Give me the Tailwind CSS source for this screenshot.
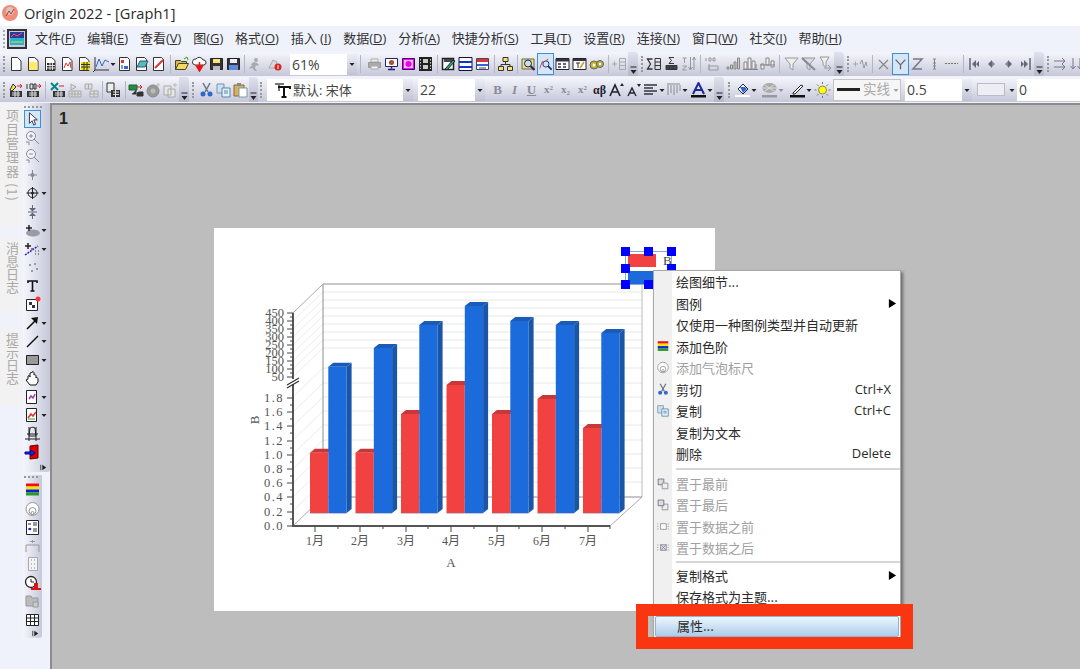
<!DOCTYPE html>
<html lang="zh-CN">
<head>
<meta charset="UTF-8">
<title>Origin 2022 - [Graph1]</title>
<script src="https://cdn.jsdelivr.net/npm/@tailwindcss/browser@4"></script>
</head>
<body class="w-[1080px] h-[669px] overflow-hidden bg-[#eff1fb] text-[#333] font-['Open_Sans','Noto_Sans_CJK_SC',sans-serif]">

<!-- icon sprites -->
<svg class="hidden">
  <symbol id="new" viewBox="0 0 17 16"><path d="M3.5 1.5h6l3.500 3.500v9.500h-9.500z" fill="#fff" stroke="#333"/></symbol>
  <symbol id="ydoc" viewBox="0 0 17 16"><path d="M3.500 1.500h6l3.500 3v10h-9.500z" fill="#fff" stroke="#333"/><path d="M4 6h8.500v8h-8.500z" fill="#ffe96e"/></symbol>
  <symbol id="ws" viewBox="0 0 17 16"><path d="M3.500 1.500h6l3.500 3v10h-9.500z" fill="#fff" stroke="#333"/><path d="M5 7h8v7h-8z" fill="#333"/><path d="M5 9.500h8M5 12h8M8 7v7M10.500 7v7" stroke="#ddd"/></symbol>
  <symbol id="grdoc" viewBox="0 0 17 16"><path d="M3.500 1.500h6l3.500 3v10h-9.500z" fill="#fff" stroke="#333"/><path d="M5 12l2-5 2 3 2-4 1 6" fill="none" stroke="#d33"/></symbol>
  <symbol id="yg" viewBox="0 0 17 16"><path d="M3.500 1.500h6l3.500 3v10h-9.500z" fill="#fff" stroke="#333"/><path d="M5 6h9v8h-9z" fill="#f2e100"/><path d="M5 8.500h9M5 11h9M8 6v8M11 6v8" stroke="#333"/></symbol>
  <symbol id="chart" viewBox="0 0 17 16"><path d="M2 1v13h14" fill="none" stroke="#333"/><path d="M3 11l3-8 3 7 3-6 4 2" fill="none" stroke="#36c"/><path d="M2 14l-2 2" stroke="#333"/></symbol>
  <symbol id="lay1" viewBox="0 0 17 16"><path d="M3.500 1.500h8l2 2v11h-10z" fill="#fff" stroke="#333"/><path d="M5 4h3v3h-3z" fill="#d33"/><path d="M8 10h4v3h-4z" fill="#36c"/><path d="M5 9h2v4h-2z" fill="#6ab"/></symbol>
  <symbol id="lay2" viewBox="0 0 17 16"><path d="M3.500 1.500h8l2 2v11h-10z" fill="#fff" stroke="#333"/><path d="M4 11l3-6h8l-3 6z" fill="#5bb" stroke="#357"/></symbol>
  <symbol id="lay3" viewBox="0 0 17 16"><path d="M3.500 1.500h8l2 2v11h-10z" fill="#fff" stroke="#333"/><path d="M5 12l8-8" stroke="#d33" stroke-width="2"/></symbol>
  <symbol id="open" viewBox="0 0 17 16"><path d="M1.500 13.500v-9h5l1 1h5v2" fill="#d8b94a" stroke="#443"/><path d="M1.500 13.500l3-6h10l-3 6z" fill="#f3d95e" stroke="#443"/><path d="M10 3l3-2 1 3" fill="none" stroke="#2a2"/></symbol>
  <symbol id="cloud" viewBox="0 0 17 16"><path d="M4 9a3 3 0 0 1 1-6 4 4 0 0 1 7 1 2.500 2.500 0 0 1 1 5z" fill="#fff" stroke="#333"/><path d="M8.500 6v6M5.500 10l3 5 3-5z" fill="#e11" stroke="#e11" stroke-width="1.500"/></symbol>
  <symbol id="save" viewBox="0 0 17 16"><path d="M2.500 2.500h12v11h-12z" fill="#333" stroke="#222"/><path d="M5 3h7v4h-7z" fill="#f7e67a"/><path d="M5 10h7v4h-7z" fill="#bbb"/></symbol>
  <symbol id="saveall" viewBox="0 0 17 16"><path d="M2.500 2.500h12v11h-12z" fill="#334" stroke="#222"/><path d="M5 3h7v4h-7z" fill="#eee"/><path d="M4 9h9v5h-9z" fill="#5a8ad8"/></symbol>
  <symbol id="run" viewBox="0 0 17 16"><path d="M10 2a2 2 0 1 1 0 4 2 2 0 0 1 0-4zM5 8l3-2 3 1 2 2-2 1-1-1-1 3 2 3h-2l-3-3-3 1 1-2 2-1z" fill="#a9a9b0"/></symbol>
  <symbol id="grayred" viewBox="0 0 17 16"><path d="M3 12l4-8 4 2-2 6z" fill="#d8d8dc" stroke="#aaa"/><circle cx="12" cy="11" r="3.500" fill="#d22"/><path d="M12 9v4" stroke="#fff"/></symbol>
  <symbol id="print" viewBox="0 0 17 16"><path d="M5 3h7v3h-7z" fill="#eee" stroke="#aaa"/><path d="M2.500 6.500h12v5h-12z" fill="#aaa" stroke="#999"/><path d="M5 10h7v3h-7z" fill="#f3f3f3" stroke="#aaa"/></symbol>
  <symbol id="screen" viewBox="0 0 17 16"><path d="M2.500 2.500h12v8h-12z" fill="#fff" stroke="#226"/><circle cx="8.500" cy="6.500" r="2.500" fill="#d33"/><path d="M6 8l5-3" stroke="#2a2"/><path d="M8.500 10.500v2M5 13.500h7" stroke="#226" stroke-width="1.500"/></symbol>
  <symbol id="pink" viewBox="0 0 17 16"><path d="M2.500 2.500h12v11h-12z" fill="#f0f" stroke="#306"/><path d="M4 4h9v8h-9z" fill="#fbd"/><circle cx="8.500" cy="8" r="3" fill="#e0e"/></symbol>
  <symbol id="film" viewBox="0 0 17 16"><path d="M2 1h13v14h-13z" fill="#222"/><path d="M6 3h5v4h-5zM6 9h5v4h-5z" fill="#ccc"/><path d="M3.500 3v10M13.500 3v10" stroke="#ccc" stroke-dasharray="1.500 1.500"/></symbol>
  <symbol id="note" viewBox="0 0 17 16"><path d="M2.500 2.500h11v11h-11z" fill="#fff" stroke="#222" stroke-width="1.500"/><path d="M4 3h9v3h-9z" fill="#445"/><path d="M5 13l8-9 2 1-8 9z" fill="#2a8" stroke="#222"/></symbol>
  <symbol id="lines" viewBox="0 0 17 16"><path d="M2 1.500h13v13h-13z" fill="#fff" stroke="#113"/><path d="M2 5h13v2h-13zM2 10h13v2h-13z" fill="#1133cc"/></symbol>
  <symbol id="lines2" viewBox="0 0 17 16"><path d="M2.500 2.500h12v11h-12z" fill="#fff" stroke="#446"/><path d="M3 3h11v3h-11z" fill="#d33"/><path d="M3 8h11v2h-11z" fill="#36c"/><path d="M5 12h7" stroke="#446"/></symbol>
  <symbol id="tree" viewBox="0 0 17 16"><path d="M6 1.500h5v4h-5zM1.500 10.500h5v4h-5zM10.500 10.500h5v4h-5z" fill="#fbe36a" stroke="#333"/><path d="M8.500 5.500v3M4 10.500v-2h9v2" fill="none" stroke="#333"/></symbol>
  <symbol id="find" viewBox="0 0 17 16"><path d="M2 3h12v10h-12z" fill="#f0e070" stroke="#665"/><circle cx="8" cy="7.500" r="3.500" fill="#bfe0f5" stroke="#226"/><path d="M10.500 10l4 4" stroke="#226" stroke-width="2"/></symbol>
  <symbol id="findg" viewBox="0 0 17 16"><path d="M2 13l3-8 3 4 3-7" fill="none" stroke="#d33"/><circle cx="9" cy="8" r="3.500" fill="#cfe8f8" stroke="#226"/><path d="M11.500 10.500l4 4" stroke="#226" stroke-width="2"/></symbol>
  <symbol id="table" viewBox="0 0 17 16"><path d="M2 2.500h13v11h-13z" fill="#fff" stroke="#223"/><path d="M2 3h13v2.500h-13z" fill="#334"/><path d="M4 8h3M9 8h3M4 11h3M9 11h3" stroke="#334" stroke-width="1.500"/></symbol>
  <symbol id="tedit" viewBox="0 0 17 16"><path d="M2 2.500h13v11h-13z" fill="#fff" stroke="#223"/><path d="M2 3h13v2h-13z" fill="#334"/><path d="M5 7h4M7 7v5" stroke="#333"/><path d="M9 12l4-6" stroke="#c93" stroke-width="1.500"/></symbol>
  <symbol id="gear" viewBox="0 0 17 16"><circle cx="6" cy="9" r="4" fill="#c9b021" stroke="#665"/><circle cx="12" cy="8" r="3.500" fill="#a9b04a" stroke="#665"/><circle cx="6" cy="9" r="1.500" fill="#fff"/><circle cx="12" cy="8" r="1.200" fill="#fff"/></symbol>
  <symbol id="plusrow" viewBox="0 0 17 16"><path d="M1 8h5M3.500 5.500v5" stroke="#aaa"/><path d="M8.500 2.500h6v11h-6zM8.500 6h6M8.500 9.500h6" fill="none" stroke="#aaa"/></symbol>
  <symbol id="sumrow" viewBox="0 0 17 16"><path d="M6.500 3h-5l3 5-3 5h5" fill="none" stroke="#333" stroke-width="1.300"/><path d="M9 2.500h5.500v11h-5.500zM9 6h5.500M9 9.500h5.500" fill="none" stroke="#333"/></symbol>
  <symbol id="sumcol" viewBox="0 0 17 16"><path d="M11 1.500h-5l2.500 3-2.500 3h5" fill="none" stroke="#333"/><path d="M3 9.500h11v4h-11zM6.500 9.500v4M10 9.500v4" fill="#444" stroke="#333"/></symbol>
  <symbol id="sort" viewBox="0 0 17 16"><path d="M10.500 1v13M8.500 11l2 3 2-3M14 14v-13M12.500 4l1.500-3 1.500 3" fill="none" stroke="#999"/><path d="M2.500 2h4M4.500 2v5M2.500 10h4l-4 4h4" fill="none" stroke="#999"/></symbol>
  <symbol id="pct" viewBox="0 0 17 16"><path d="M3 5v-3M6 2h2v3h-2zM10 2h2v3h-2zM6 10h9v4h-9zM6 8v6" fill="none" stroke="#999"/></symbol>
  <symbol id="bar1" viewBox="0 0 17 16"><path d="M2 13h2v-2h-2zM5.500 13h2v-4h-2zM9 13h2v-7h-2zM12.500 13h2v-11h-2z" fill="#ccc" stroke="#888"/></symbol>
  <symbol id="bar2" viewBox="0 0 17 16"><path d="M2 13v-7h3v7zM6 13v-11h3v11zM10 13v-8h3v8zM14 13v-5" fill="#eee" stroke="#888"/><path d="M1 13.500h15" stroke="#888"/></symbol>
  <symbol id="bar3" viewBox="0 0 17 16"><path d="M2 8h3v5h-3zM7 2h3v7h-3zM12 5h3v6h-3zM1 9h15" fill="#eee" stroke="#888"/></symbol>
  <symbol id="filter" viewBox="0 0 17 16"><path d="M2 2h13l-5 6v6l-3-2v-4z" fill="#eee" stroke="#999"/></symbol>
  <symbol id="filterx" viewBox="0 0 17 16"><path d="M2 2h13l-5 6v6l-3-2v-4z" fill="#ddd" stroke="#999"/><path d="M2 2l13 12" stroke="#889" stroke-width="2"/></symbol>
  <symbol id="filtera" viewBox="0 0 17 16"><path d="M3 1h9l-3 5v5l-3-2v-3z" fill="#eee" stroke="#999"/><path d="M7 12h7M11 9l3 3-3 3" fill="none" stroke="#999"/></symbol>
  <symbol id="plus-s" viewBox="0 0 17 16"><path d="M1 8h5M3.500 5.500v5" stroke="#aaa"/><path d="M8 8l2-4 2 8 2-6 1 4" fill="none" stroke="#999"/></symbol>
  <symbol id="xx" viewBox="0 0 17 16"><path d="M4 4l9 9M13 4l-9 9" stroke="#888" stroke-width="1.200"/></symbol>
  <symbol id="yy" viewBox="0 0 17 16"><path d="M3 3l5.500 6 5.500-6M8.500 9v5" fill="none" stroke="#667" stroke-width="1.500"/></symbol>
  <symbol id="zz" viewBox="0 0 17 16"><path d="M4 3h9l-9 10h9" fill="none" stroke="#778" stroke-width="1.500"/></symbol>
  <symbol id="ival" viewBox="0 0 17 16"><path d="M7 3h3M8.500 3v10M7 13h3" stroke="#888"/><path d="M7 7h3M7 10h3" stroke="#888"/></symbol>
  <symbol id="none" viewBox="0 0 17 16"><path d="M1 6h15v3h-15z" fill="#ddd"/><path d="M2 7.500h13" stroke="#777" stroke-dasharray="2 1"/></symbol>
  <symbol id="first" viewBox="0 0 17 16"><path d="M4 2v12" stroke="#667" stroke-width="1.500"/><path d="M6 8l4-4v8zM10 8l3-3v6z" fill="#667"/></symbol>
  <symbol id="prev" viewBox="0 0 17 16"><path d="M5 8l4-4v8z" fill="#667"/><path d="M9 5l3 3-3 3z" fill="#889"/></symbol>
  <symbol id="next" viewBox="0 0 17 16"><path d="M12 8l-4-4v8z" fill="#667"/><path d="M8 5l-3 3 3 3z" fill="#889"/></symbol>
  <symbol id="last" viewBox="0 0 17 16"><path d="M13 2v12" stroke="#667" stroke-width="1.500"/><path d="M11 8l-4-4v8zM7 8l-3-3v6z" fill="#667"/></symbol>
  <symbol id="swap" viewBox="0 0 17 16"><path d="M2 5h11M10 2l3 3-3 3M2 11h11M10 8l3 3-3 3" fill="none" stroke="#778"/></symbol>
  <symbol id="down2" viewBox="0 0 17 16"><path d="M4 2v11M1.500 10l2.500 3 2.500-3M11 2v11M8.500 10l2.500 3 2.500-3" fill="none" stroke="#778"/></symbol>
  <!-- second row -->
  <symbol id="imp1" viewBox="0 0 17 16"><path d="M2 9h12v6h-12z" fill="#333"/><path d="M4 11h8M4 13h8M7 9v6M10 9v6" stroke="#ddd"/><path d="M2 8l3-6 3 3-4 4z" fill="#f3e34a" stroke="#333"/><path d="M9 4h5M12 2l2 2-2 2" fill="none" stroke="#d22"/></symbol>
  <symbol id="imp2" viewBox="0 0 17 16"><path d="M2 9h12v6h-12z" fill="#333"/><path d="M4 11h8M4 13h8M7 9v6M10 9v6" stroke="#ddd"/><path d="M2 2v5M5 2h3v5h-3zM9 2h2v5h-2z" fill="none" stroke="#333"/><path d="M12 4h3M14 2l2 2-2 2" fill="none" stroke="#d22"/></symbol>
  <symbol id="xcol" viewBox="0 0 17 16"><path d="M2 1l7 7M9 1l-7 7" stroke="#088" stroke-width="2"/><path d="M4 9h12v6h-12z" fill="#333"/><path d="M6 11h8M6 13h8M9 9v6M12 9v6" stroke="#ddd"/><path d="M10 4h5" stroke="#d22"/></symbol>
  <symbol id="gcol1" viewBox="0 0 17 16"><path d="M3 9h12v6h-12zM6 9v6M9 9v6M12 9v6M3 12h12M5 2l5 3-5 3z" fill="#ddd" stroke="#aaa"/></symbol>
  <symbol id="gcol2" viewBox="0 0 17 16"><path d="M2 2h7v5h-7zM5.500 2v5M7 9h8v6h-8zM11 9v6M7 12h8" fill="#ddd" stroke="#aaa"/></symbol>
  <symbol id="mcopy" viewBox="0 0 17 16"><path d="M2 1h7v9h-7z" fill="#eee" stroke="#333"/><path d="M6 8h9v7h-9z" fill="#333"/><path d="M8 10h6M8 12.500h6M10.500 8v7" stroke="#ddd"/></symbol>
  <symbol id="grtool" viewBox="0 0 17 16"><path d="M1 3h8v5h-8z" fill="#2a8a3a" stroke="#164"/><path d="M9 5h5M12 3l2 2-2 2" fill="none" stroke="#d22"/><path d="M8 8v4h-4M11 10h4v4h-6v-3z" fill="#333" stroke="#333"/></symbol>
  <symbol id="grball" viewBox="0 0 17 16"><circle cx="8" cy="9" r="6" fill="#999" stroke="#888"/><circle cx="8" cy="9" r="2.500" fill="#bbb"/><path d="M11 3h4M13 1v4" stroke="#bbb"/></symbol>
  <symbol id="grcopy" viewBox="0 0 17 16"><path d="M2 4h7v9h-7zM6 7h7v8h-7z" fill="#e6e6e6" stroke="#aaa"/><path d="M11 3h4M13 1v4" stroke="#bbb"/></symbol>
  <symbol id="cut" viewBox="0 0 17 16"><path d="M5 1l5 9M12 1l-5 9" stroke="#678" stroke-width="1.500"/><circle cx="5" cy="12" r="2.500" fill="#36c"/><circle cx="12" cy="12" r="2.500" fill="#36c"/></symbol>
  <symbol id="copy" viewBox="0 0 17 16"><path d="M2 2h7v9h-7z" fill="#cfe0f4" stroke="#79a"/><path d="M7 6h8v9h-8z" fill="#e6f0fb" stroke="#58a"/><path d="M9 9h4M9 11h4" stroke="#58a"/></symbol>
  <symbol id="paste" viewBox="0 0 17 16"><path d="M2 3h10v11h-10z" fill="#d8b25a" stroke="#864"/><path d="M5 1h4v3h-4z" fill="#888"/><path d="M7 6h8v9h-8z" fill="#fff" stroke="#79a"/></symbol>
  <symbol id="fT" viewBox="0 0 17 16"><path d="M1 2h9M5 2v7" stroke="#777" stroke-width="2"/><path d="M4 5h12v2M10 5v10M7.500 15h5" fill="none" stroke="#111" stroke-width="2"/></symbol>
  <symbol id="aup" viewBox="0 0 17 16"><path d="M2 14l5-11 5 11M4 10h6" fill="none" stroke="#223" stroke-width="1.600"/><path d="M12 4l2-3 2 3z" fill="#223"/></symbol>
  <symbol id="adn" viewBox="0 0 17 16"><path d="M3 14l4-8 4 8M5 11h4" fill="none" stroke="#223" stroke-width="1.400"/><path d="M12 2l2 3 2-3z" fill="#223"/></symbol>
  <symbol id="align" viewBox="0 0 17 16"><path d="M2 3h13M2 6h9M2 9h13M2 12h9" stroke="#334" stroke-width="1.300"/></symbol>
  <symbol id="tab" viewBox="0 0 17 16"><path d="M2 2h13M3 3v10M6 3v8M9 3v10M12 3v8M15 3v6" stroke="#889"/></symbol>
  <symbol id="acol" viewBox="0 0 17 16"><path d="M3 12l5.500-11 5.500 11M5.500 8h6" fill="none" stroke="#1c2a9c" stroke-width="2"/><path d="M1 13h15v2.500h-15z" fill="#111"/></symbol>
  <symbol id="fill" viewBox="0 0 17 16"><path d="M4 7l5-5 5 5-5 5z" fill="#fff" stroke="#224"/><path d="M6 5h5l2 2-4 4z" fill="#36c"/><path d="M1 14h15" stroke="#fff" stroke-width="2"/></symbol>
  <symbol id="pat" viewBox="0 0 17 16"><ellipse cx="8.500" cy="6" rx="7" ry="5" fill="#aaa"/><path d="M2 6h13M4 3l9 6M13 3l-9 6" stroke="#ddd"/><path d="M1 13h15v2.500h-15z" fill="#999"/></symbol>
  <symbol id="pen" viewBox="0 0 17 16"><path d="M4 11l8-8 2 1-8 8h-2z" fill="#fff" stroke="#222"/><path d="M1 13h15v2.500h-15z" fill="#111"/></symbol>
  <symbol id="sun" viewBox="0 0 17 16"><circle cx="8.500" cy="8" r="4" fill="#ff0" stroke="#886"/><path d="M8.500 0v2M8.500 14v2M0.500 8h2M14.500 8h2M3 2.500l1.500 1.500M14 2.500l-1.500 1.500M3 13.500l1.500-1.500M14 13.500l-1.500-1.500" stroke="#776"/></symbol>
  <!-- left bar -->
  <symbol id="ptr" viewBox="0 0 17 16"><path d="M5 1v12l3-3 2 5 2-1-2-5h4z" fill="#fff" stroke="#223"/></symbol>
  <symbol id="zin" viewBox="0 0 17 16"><circle cx="7" cy="6" r="4.500" fill="#f4f4f8" stroke="#889"/><path d="M5 6h4M7 4v4M10 9l5 5" stroke="#889"/><path d="M2 12h3v3" fill="none" stroke="#889"/></symbol>
  <symbol id="zout" viewBox="0 0 17 16"><circle cx="7" cy="6" r="4.500" fill="#f4f4f8" stroke="#889"/><path d="M5 6h4M10 9l5 5" stroke="#889"/><path d="M2 12h3v3" fill="none" stroke="#889"/></symbol>
  <symbol id="cross" viewBox="0 0 17 16"><path d="M8.500 3v10M4 8h9" stroke="#889"/><circle cx="8.500" cy="8" r="2" fill="#889"/></symbol>
  <symbol id="target" viewBox="0 0 17 16"><circle cx="8.500" cy="8" r="4.500" fill="none" stroke="#222"/><path d="M8.500 2v12M2.500 8h12" stroke="#222"/><circle cx="8.500" cy="8" r="1.500" fill="#222"/></symbol>
  <symbol id="vsel" viewBox="0 0 17 16"><path d="M5 4l3.500 3.500 3.500-3.500zM5 12l3.500-3.500 3.500 3.500z" fill="#667"/><path d="M4 8h9M8.500 1v3M8.500 12v3" stroke="#667"/></symbol>
  <symbol id="ell" viewBox="0 0 17 16"><ellipse cx="9" cy="11" rx="7" ry="3.500" fill="#9a9aa8"/><path d="M5 3v6M2 6h6" stroke="#222" stroke-width="1.500"/></symbol>
  <symbol id="draw" viewBox="0 0 17 16"><path d="M1 14l13-9" stroke="#22c" stroke-dasharray="2 1" stroke-width="1.500"/><path d="M4 2v6M1 5h6" stroke="#222" stroke-width="1.500"/><path d="M11 10h1M14 10h1M11 13h1M14 13h1" stroke="#333"/><circle cx="8" cy="8" r="1" fill="#c33"/></symbol>
  <symbol id="dots" viewBox="0 0 17 16"><path d="M5 5h2v2h-2zM10 4h2v2h-2zM12 9h2v2h-2zM7 11h2v2h-2z" fill="#99a"/></symbol>
  <symbol id="bigT" viewBox="0 0 17 16"><path d="M4 5v-2h9v2M8.500 3v10M6.500 13h4" fill="none" stroke="#111" stroke-width="1.600"/></symbol>
  <symbol id="plot" viewBox="0 0 17 16"><path d="M2.500 3.500h11v11h-11z" fill="#fff" stroke="#223"/><path d="M5 6h3v3h-3zM8 9h3v3h-3z" fill="#333"/><circle cx="14" cy="3" r="2.500" fill="#f33"/></symbol>
  <symbol id="arr" viewBox="0 0 17 16"><path d="M3 14l9-9" stroke="#111" stroke-width="1.600"/><path d="M14 2l-1 7-6-6z" fill="#111"/></symbol>
  <symbol id="ln" viewBox="0 0 17 16"><path d="M3 14l11-11" stroke="#111" stroke-width="1.500"/></symbol>
  <symbol id="rectt" viewBox="0 0 17 16"><path d="M2.500 3.500h12v9h-12z" fill="#999" stroke="#222"/></symbol>
  <symbol id="hand" viewBox="0 0 17 16"><path d="M4 9v-3c1-1 2 0 2 1v-4c1-1 2 0 2 0v-1c1-1 2 0 2 1v2c1-1 2 0 2 1v2c1-1 2 0 2 1v3l-2 3h-6l-4-5z" fill="#fff" stroke="#111"/></symbol>
  <symbol id="magic" viewBox="0 0 17 16"><path d="M2.500 1.500h10v13h-10z" fill="#fff" stroke="#222"/><path d="M5 10l2-3 2 2 2-4" fill="none" stroke="#a3a" stroke-width="1.500"/></symbol>
  <symbol id="redg" viewBox="0 0 17 16"><path d="M2.500 1.500h10v13h-10z" fill="#fff" stroke="#222"/><path d="M4 11l3-4 2 2 3-4" fill="none" stroke="#d33" stroke-width="1.500"/><path d="M4 12h7" stroke="#2a2"/></symbol>
  <symbol id="spider" viewBox="0 0 17 16"><path d="M1 13h15M3 8h11M6 2c2-1 4-1 5 0l1 8h-7zM5 1v14M12 1v14" fill="none" stroke="#222"/></symbol>
  <symbol id="exit" viewBox="0 0 17 16"><path d="M6 2l8-1v13l-8 1z" fill="#d00" stroke="#600"/><path d="M1 8h6v-2l4 3-4 3v-2h-6z" fill="#13c" stroke="#00a"/></symbol>
  <symbol id="stripes" viewBox="0 0 17 16"><path d="M2 1.500h13v3h-13z" fill="#e11"/><path d="M2 4.500h13v3h-13z" fill="#f7e400"/><path d="M2 7.500h13v3h-13z" fill="#1122cc"/><path d="M2 10.500h13v3h-13z" fill="#2a9a2a"/></symbol>
  <symbol id="bubble" viewBox="0 0 17 16"><circle cx="8.500" cy="8" r="6.500" fill="#fff" stroke="#999"/><circle cx="8.500" cy="10" r="3.500" fill="none" stroke="#999"/><circle cx="8.500" cy="12" r="1.500" fill="none" stroke="#999"/></symbol>
  <symbol id="lg" viewBox="0 0 17 16"><path d="M2.500 1.500h12v14h-12z" fill="#fff" stroke="#223"/><path d="M4 5h3M4 10h3" stroke="#222"/><circle cx="6" cy="10" r="1.300" fill="#22c"/><path d="M9 3h4v4h-4zM9 9h4v4h-4z" fill="#999"/></symbol>
  <symbol id="bridge" viewBox="0 0 17 16"><path d="M2 14v-7h13v7" fill="none" stroke="#999"/><path d="M8.500 2v3M6 3.500h5" stroke="#999"/></symbol>
  <symbol id="ladder" viewBox="0 0 17 16"><path d="M4.500 1.500h9v13h-9z" fill="#f4f4f4" stroke="#aaa"/><path d="M7 4h1M10 4h1M7 8h1M10 8h1M7 12h1M10 12h1" stroke="#888"/></symbol>
  <symbol id="clock" viewBox="0 0 17 16"><circle cx="7" cy="7" r="5.500" fill="#fff" stroke="#222" stroke-width="1.300"/><path d="M7 4v3h3" fill="none" stroke="#222"/><path d="M10 8h4v5h3v2h-10v-2h3z" fill="#d11"/></symbol>
  <symbol id="folder" viewBox="0 0 17 16"><path d="M2 3h5l1 2h6v8h-12z" fill="#bbb" stroke="#999"/><path d="M9 9h5v5h-5z" fill="#ccc" stroke="#999"/></symbol>
  <symbol id="grid" viewBox="0 0 17 16"><path d="M2.500 2.500h12v11h-12zM2.500 6h12M2.500 9.500h12M6.500 2.500v11M10.500 2.500v11" fill="#fff" stroke="#222"/></symbol>
  <!-- menu -->
  <symbol id="front" viewBox="0 0 17 16"><path d="M2.500 2.500h7v7h-7z" fill="#ddd" stroke="#667"/><path d="M7.500 7.500h7v7h-7z" fill="#eee" stroke="#889"/></symbol>
  <symbol id="back" viewBox="0 0 17 16"><path d="M7.500 7.500h7v7h-7z" fill="#eee" stroke="#889"/><path d="M2.500 2.500h7v7h-7z" fill="#ddd" stroke="#667"/></symbol>
  <symbol id="dfront" viewBox="0 0 17 16"><path d="M5.500 4.500h7v7h-7z" fill="#fff" stroke="#889"/><path d="M1 5h2M1 8h2M1 11h2M14 5h2M14 8h2M14 11h2" stroke="#aaa"/></symbol>
  <symbol id="dback" viewBox="0 0 17 16"><path d="M5.500 4.500h7v7h-7z" fill="#ddd" stroke="#889"/><path d="M5.500 4.500l7 7M12.500 4.500l-7 7" stroke="#889"/><path d="M1 5h2M1 8h2M1 11h2M14 5h2M14 8h2M14 11h2" stroke="#aaa"/></symbol>
  <!-- chevron and small drop arrow -->
  <symbol id="chev" viewBox="0 0 9 9"><path d="M1.500 1h6" stroke="#222"/><path d="M1.500 4h6l-3 4z" fill="#222"/></symbol>
  <symbol id="dd" viewBox="0 0 6 16"><path d="M0.500 7h5l-2.500 3z" fill="#222"/></symbol>
  <symbol id="tri" viewBox="0 0 10 12"><path d="M1 1l8 5-8 5z" fill="#000"/></symbol>
</svg>

<!-- title bar -->
<header class="h-[26px] bg-white flex items-center pl-[1px]">
  <svg class="w-[18px] h-[18px] shrink-0" viewBox="0 0 18 18"><circle cx="9" cy="9" r="8" fill="#ef8d78"/><circle cx="9" cy="7" r="4" fill="#d9c5c0"/><path d="M5 12l3-5 2 3 3-5" fill="none" stroke="#b04040"/></svg>
  <span class="ml-[5px] text-[14.600px] leading-none text-[#2b2b2b]">Origin 2022 - [Graph1]</span>
</header>

<!-- menu bar -->
<nav class="h-[26px] flex items-center text-[13px] text-[#333] pl-[3px]">
  <span class="w-[2px] h-[18px] border-l-2 border-dotted border-[#aaa] mr-[2px]"></span>
  <svg class="w-[20px] h-[20px] shrink-0 mr-[8px]" viewBox="0 0 20 20"><path d="M1 1h18v18h-18z" fill="#c9cbd6" stroke="#333" stroke-width="2"/><path d="M3 3h14v6h-14z" fill="#2a3aa0"/><path d="M3 9h14v7h-14z" fill="#27b3c9"/><path d="M4 8l3-3 3 2 5-3" fill="none" stroke="#f55"/><path d="M4 13h12" stroke="#f0d040"/></svg>
  <div class="flex gap-x-[11.800px] whitespace-nowrap">
    <span>文件(<u>F</u>)</span><span>编辑(<u>E</u>)</span><span>查看(<u>V</u>)</span><span>图(<u>G</u>)</span><span>格式(<u>O</u>)</span><span>插入 (<u>I</u>)</span><span>数据(<u>D</u>)</span><span>分析(<u>A</u>)</span><span>快捷分析(<u>S</u>)</span><span>工具(<u>T</u>)</span><span>设置(<u>R</u>)</span><span>连接(<u>N</u>)</span><span>窗口(<u>W</u>)</span><span>社交(<u>I</u>)</span><span>帮助(<u>H</u>)</span>
  </div>
</nav>

<!-- toolbar row 1 -->
<div class="h-[24px] flex overflow-hidden">
  <div class="w-[638px] shrink-0 flex items-center pl-[3px] bg-linear-to-b from-[#f5f6fc] to-[#c6c8d9] rounded-tr-[3px]">
    <span class="w-[2px] h-[16px] border-l-2 border-dotted border-[#999] mr-[3px]"></span>
    <svg class="w-[17px] h-4 shrink-0"><use href="#new"/></svg>
    <svg class="w-[17px] h-4 shrink-0"><use href="#ydoc"/></svg>
    <svg class="w-[17px] h-4 shrink-0"><use href="#ws"/></svg>
    <svg class="w-[17px] h-4 shrink-0"><use href="#grdoc"/></svg>
    <svg class="w-[17px] h-4 shrink-0"><use href="#yg"/></svg>
    <svg class="w-[17px] h-4 shrink-0"><use href="#chart"/></svg>
    <svg class="w-[6px] h-4 shrink-0"><use href="#dd"/></svg>
    <svg class="w-[17px] h-4 shrink-0"><use href="#lay1"/></svg>
    <svg class="w-[17px] h-4 shrink-0"><use href="#lay2"/></svg>
    <svg class="w-[17px] h-4 shrink-0"><use href="#lay3"/></svg>
    <span class="w-px h-[18px] bg-[#b4b6c8] mx-[3px]"></span>
    <svg class="w-[17px] h-4 shrink-0"><use href="#open"/></svg>
    <svg class="w-[17px] h-4 shrink-0"><use href="#cloud"/></svg>
    <svg class="w-[17px] h-4 shrink-0"><use href="#save"/></svg>
    <svg class="w-[17px] h-4 shrink-0"><use href="#saveall"/></svg>
    <span class="w-px h-[18px] bg-[#b4b6c8] mx-[2px]"></span>
    <svg class="w-[17px] h-4 shrink-0 -ml-px"><use href="#run"/></svg>
    <svg class="w-[17px] h-4 shrink-0 ml-[3px]"><use href="#grayred"/></svg>
    <div class="ml-[7px] w-[67px] h-[21px] shrink-0 flex bg-white">
      <span class="flex-1 pl-[2px] text-[14px] leading-[21px] text-[#444]">61%</span>
      <span class="w-[10px] flex items-center bg-linear-to-b from-[#eceef6] to-[#c0c2d2]"><svg class="w-[6px] h-4 ml-[2px]"><use href="#dd"/></svg></span>
    </div>
    <span class="w-px h-[18px] bg-[#b4b6c8] ml-[3px] mr-[5px]"></span>
    <svg class="w-[17px] h-4 shrink-0"><use href="#print"/></svg>
    <svg class="w-[17px] h-4 shrink-0"><use href="#screen"/></svg>
    <svg class="w-[17px] h-4 shrink-0"><use href="#pink"/></svg>
    <svg class="w-[17px] h-4 shrink-0"><use href="#film"/></svg>
    <span class="w-px h-[18px] bg-[#b4b6c8] mx-[2.500px]"></span>
    <svg class="w-[17px] h-4 shrink-0"><use href="#note"/></svg>
    <svg class="w-[17px] h-4 shrink-0"><use href="#lines"/></svg>
    <svg class="w-[17px] h-4 shrink-0"><use href="#lines2"/></svg>
    <span class="w-px h-[18px] bg-[#b4b6c8] mx-[2.500px]"></span>
    <svg class="w-[17px] h-4 shrink-0"><use href="#tree"/></svg>
    <span class="w-px h-[18px] bg-[#b4b6c8] mx-[2.500px]"></span>
    <svg class="w-[17px] h-4 shrink-0"><use href="#find"/></svg>
    <span class="w-[17px] h-[22px] shrink-0 flex items-center bg-[#d5e7f7] border border-[#3d8fd6]"><svg class="w-[15px] h-4"><use href="#findg"/></svg></span>
    <svg class="w-[17px] h-4 shrink-0"><use href="#table"/></svg>
    <svg class="w-[17px] h-4 shrink-0"><use href="#tedit"/></svg>
    <svg class="w-[17px] h-4 shrink-0"><use href="#gear"/></svg>
    <span class="w-px h-[18px] bg-[#b4b6c8] mx-[2.500px]"></span>
    <svg class="w-[17px] h-4 shrink-0"><use href="#plusrow"/></svg>
    <span class="ml-auto w-[10px] self-stretch flex items-end justify-center pb-[1px] bg-linear-to-b from-[#e0e2ee] to-[#b5b7ca] rounded-tr-[3px]"><svg class="w-[9px] h-[9px]"><use href="#chev"/></svg></span>
  </div>
  <div class="w-[206px] shrink-0 flex items-center pl-[3px] bg-linear-to-b from-[#f5f6fc] to-[#c6c8d9]">
    <span class="w-[2px] h-[16px] border-l-2 border-dotted border-[#999] mr-[3px]"></span>
    <svg class="w-[17px] h-4 shrink-0"><use href="#sumrow"/></svg>
    <svg class="w-[17px] h-4 shrink-0"><use href="#sumcol"/></svg>
    <svg class="w-[17px] h-4 shrink-0"><use href="#sort"/></svg>
    <span class="w-px h-[18px] bg-[#b4b6c8] mx-[2.500px]"></span>
    <svg class="w-[17px] h-4 shrink-0 mr-[5px]"><use href="#pct"/></svg>
    <svg class="w-[17px] h-4 shrink-0"><use href="#bar1"/></svg>
    <svg class="w-[17px] h-4 shrink-0"><use href="#bar2"/></svg>
    <svg class="w-[17px] h-4 shrink-0"><use href="#bar3"/></svg>
    <span class="w-px h-[18px] bg-[#b4b6c8] mx-[3px]"></span>
    <svg class="w-[17px] h-4 shrink-0"><use href="#filter"/></svg>
    <svg class="w-[17px] h-4 shrink-0"><use href="#filterx"/></svg>
    <svg class="w-[17px] h-4 shrink-0"><use href="#filtera"/></svg>
    <span class="ml-auto w-[10px] self-stretch flex items-end justify-center pb-[1px] bg-linear-to-b from-[#e0e2ee] to-[#b5b7ca] rounded-tr-[3px]"><svg class="w-[9px] h-[9px]"><use href="#chev"/></svg></span>
  </div>
  <div class="w-[200px] shrink-0 flex items-center pl-[3px] bg-linear-to-b from-[#f5f6fc] to-[#c6c8d9]">
    <span class="w-[2px] h-[16px] border-l-2 border-dotted border-[#999] mr-[3px]"></span>
    <svg class="w-[17px] h-4 shrink-0"><use href="#plus-s"/></svg>
    <span class="w-px h-[18px] bg-[#b4b6c8] mx-[2.500px]"></span>
    <svg class="w-[17px] h-4 shrink-0"><use href="#xx"/></svg>
    <span class="w-[17px] h-[22px] shrink-0 flex items-center bg-[#d5e7f7] border border-[#3d8fd6]"><svg class="w-[15px] h-4"><use href="#yy"/></svg></span>
    <svg class="w-[17px] h-4 shrink-0"><use href="#zz"/></svg>
    <svg class="w-[17px] h-4 shrink-0"><use href="#ival"/></svg>
    <svg class="w-[17px] h-4 shrink-0"><use href="#none"/></svg>
    <span class="w-px h-[18px] bg-[#b4b6c8] mx-[2.500px]"></span>
    <svg class="w-[17px] h-4 shrink-0"><use href="#first"/></svg>
    <svg class="w-[17px] h-4 shrink-0"><use href="#prev"/></svg>
    <svg class="w-[17px] h-4 shrink-0"><use href="#next"/></svg>
    <svg class="w-[17px] h-4 shrink-0"><use href="#last"/></svg>
    <span class="ml-auto w-[10px] self-stretch flex items-end justify-center pb-[1px] bg-linear-to-b from-[#e0e2ee] to-[#b5b7ca] rounded-tr-[3px]"><svg class="w-[9px] h-[9px]"><use href="#chev"/></svg></span>
  </div>
  <div class="flex-1 flex items-center pl-[3px] bg-linear-to-b from-[#f5f6fc] to-[#c6c8d9]">
    <span class="w-[2px] h-[16px] border-l-2 border-dotted border-[#999] mr-[3px]"></span>
    <svg class="w-[17px] h-4 shrink-0"><use href="#swap"/></svg>
    <svg class="w-[17px] h-4 shrink-0"><use href="#down2"/></svg>
  </div>
</div>

<!-- toolbar row 2 -->
<div class="h-[25px] mt-px flex overflow-hidden">
  <div class="w-[189px] shrink-0 flex items-center pl-[3px] bg-linear-to-b from-[#f5f6fc] to-[#c6c8d9] rounded-tr-[3px]">
    <span class="w-[2px] h-[16px] border-l-2 border-dotted border-[#999] mr-[3px]"></span>
    <svg class="w-[17px] h-4 shrink-0"><use href="#imp1"/></svg>
    <svg class="w-[17px] h-4 shrink-0"><use href="#imp2"/></svg>
    <span class="w-px h-[18px] bg-[#b4b6c8] mx-[3px]"></span>
    <svg class="w-[17px] h-4 shrink-0"><use href="#xcol"/></svg>
    <svg class="w-[17px] h-4 shrink-0"><use href="#gcol1"/></svg>
    <svg class="w-[17px] h-4 shrink-0"><use href="#gcol2"/></svg>
    <span class="w-px h-[18px] bg-[#b4b6c8] mx-[2px]"></span>
    <svg class="w-[17px] h-4 shrink-0"><use href="#mcopy"/></svg>
    <span class="w-px h-[18px] bg-[#b4b6c8] mx-[2.500px]"></span>
    <svg class="w-[17px] h-4 shrink-0"><use href="#grtool"/></svg>
    <svg class="w-[17px] h-4 shrink-0"><use href="#grball"/></svg>
    <svg class="w-[17px] h-4 shrink-0"><use href="#grcopy"/></svg>
    <span class="ml-auto w-[10px] self-stretch flex items-end justify-center pb-[1px] bg-linear-to-b from-[#e0e2ee] to-[#b5b7ca] rounded-tr-[3px]"><svg class="w-[9px] h-[9px]"><use href="#chev"/></svg></span>
  </div>
  <div class="w-[69px] shrink-0 flex items-center pl-[3px] bg-linear-to-b from-[#f5f6fc] to-[#c6c8d9] rounded-tr-[3px]">
    <span class="w-[2px] h-[16px] border-l-2 border-dotted border-[#999] mr-[4px]"></span>
    <svg class="w-[17px] h-4 shrink-0"><use href="#cut"/></svg>
    <svg class="w-[17px] h-4 shrink-0"><use href="#copy"/></svg>
    <svg class="w-[17px] h-4 shrink-0"><use href="#paste"/></svg>
    <span class="ml-auto w-[10px] self-stretch flex items-end justify-center pb-[1px] bg-linear-to-b from-[#e0e2ee] to-[#b5b7ca] rounded-tr-[3px]"><svg class="w-[9px] h-[9px]"><use href="#chev"/></svg></span>
  </div>
  <div class="w-[466px] shrink-0 flex items-center pl-[2px] bg-linear-to-b from-[#f5f6fc] to-[#c6c8d9]">
    <span class="w-[2px] h-[16px] border-l-2 border-dotted border-[#999] mr-[5px]"></span>
    <div class="w-[146px] h-[22px] shrink-0 flex items-center bg-white">
      <svg class="w-[17px] h-4 ml-[7px] shrink-0"><use href="#fT"/></svg>
      <span class="flex-1 pl-[2px] text-[13px] leading-[22px] text-[#444] whitespace-nowrap">默认: 宋体</span>
      <span class="w-[10px] h-full flex items-center bg-linear-to-b from-[#eceef6] to-[#c0c2d2]"><svg class="w-[6px] h-4 ml-[2px]"><use href="#dd"/></svg></span>
    </div>
    <div class="ml-[5px] w-[67px] h-[22px] shrink-0 flex bg-white">
      <span class="flex-1 pl-[2px] text-[14px] leading-[22px] text-[#444]">22</span>
      <span class="w-[10px] flex items-center bg-linear-to-b from-[#eceef6] to-[#c0c2d2]"><svg class="w-[6px] h-4 ml-[2px]"><use href="#dd"/></svg></span>
    </div>
    <div class="ml-[4px] flex items-center font-['Liberation_Serif','Noto_Sans_CJK_SC',serif] text-[#8a8c9c]">
      <span class="w-[17px] text-center text-[13px] font-bold">B</span>
      <span class="w-[17px] text-center text-[13px] font-bold italic">I</span>
      <span class="w-[17px] text-center text-[13px] font-bold underline">U</span>
      <span class="w-[17px] text-center text-[11px] font-bold">x<sup class="text-[7px]">2</sup></span>
      <span class="w-[17px] text-center text-[11px] font-bold">x<sub class="text-[7px]">2</sub></span>
      <span class="w-[17px] text-center text-[11px] font-bold">x<sup class="text-[7px]">2</sup></span>
      <span class="w-[17px] text-center text-[12px] font-bold text-[#223]">αβ</span>
    </div>
    <svg class="w-[17px] h-4 shrink-0"><use href="#aup"/></svg>
    <svg class="w-[17px] h-4 shrink-0"><use href="#adn"/></svg>
    <svg class="w-[17px] h-4 shrink-0"><use href="#align"/></svg>
    <svg class="w-[6px] h-4 shrink-0"><use href="#dd"/></svg>
    <svg class="w-[17px] h-4 shrink-0"><use href="#tab"/></svg>
    <svg class="w-[6px] h-4 shrink-0"><use href="#dd"/></svg>
    <svg class="w-[17px] h-4 shrink-0 ml-[2px]"><use href="#acol"/></svg>
    <svg class="w-[6px] h-4 shrink-0"><use href="#dd"/></svg>
    <span class="ml-auto w-[10px] self-stretch flex items-end justify-center pb-[1px] bg-linear-to-b from-[#e0e2ee] to-[#b5b7ca] rounded-tr-[3px]"><svg class="w-[9px] h-[9px]"><use href="#chev"/></svg></span>
  </div>
  <div class="flex-1 flex items-center pl-[4px] bg-linear-to-b from-[#f5f6fc] to-[#c6c8d9]">
    <span class="w-[2px] h-[16px] border-l-2 border-dotted border-[#999] mr-[4px]"></span>
    <svg class="w-[17px] h-4 shrink-0"><use href="#fill"/></svg>
    <svg class="w-[6px] h-4 shrink-0"><use href="#dd"/></svg>
    <svg class="w-[17px] h-4 shrink-0 ml-[4px]"><use href="#pat"/></svg>
    <svg class="w-[6px] h-4 shrink-0 opacity-40"><use href="#dd"/></svg>
    <svg class="w-[17px] h-4 shrink-0 ml-[5px]"><use href="#pen"/></svg>
    <svg class="w-[6px] h-4 shrink-0"><use href="#dd"/></svg>
    <svg class="w-[17px] h-4 shrink-0 ml-[2px]"><use href="#sun"/></svg>
    <div class="ml-[2px] w-[68px] h-[22px] shrink-0 flex items-center bg-[#f6f6f6] border border-[#c4c4c4]">
      <span class="w-[23px] h-[2.500px] ml-[3px] bg-[#222]"></span>
      <span class="ml-[3px] text-[13.500px] leading-none text-[#aaa] whitespace-nowrap">实线</span>
      <svg class="w-[6px] h-4 ml-[3px] opacity-40"><use href="#dd"/></svg>
    </div>
    <div class="ml-[4px] w-[67px] h-[22px] shrink-0 flex bg-white">
      <span class="flex-1 pl-[2px] text-[14px] leading-[22px] text-[#444]">0.5</span>
      <span class="w-[10px] flex items-center bg-linear-to-b from-[#eceef6] to-[#c0c2d2]"><svg class="w-[6px] h-4 ml-[2px]"><use href="#dd"/></svg></span>
    </div>
    <span class="ml-[5px] w-[28px] h-[13px] shrink-0 bg-[#eceef4] border border-[#b9bbc8]"></span>
    <svg class="w-[6px] h-4 shrink-0 ml-[4px]"><use href="#dd"/></svg>
    <div class="ml-[2px] flex-1 h-[22px] flex bg-white">
      <span class="pl-[2px] text-[14px] leading-[22px] text-[#444]">0</span>
    </div>
  </div>
</div>

<!-- work area -->
<div class="h-[567px] mt-px flex">
  <!-- docked panels -->
  <aside class="w-[22px] shrink-0 flex flex-col text-[13px] leading-[20px] text-[#aaa] font-['Noto_Sans_CJK_SC',sans-serif]">
    <div class="h-[123px] bg-[#f2f2f2] flex justify-start pt-[6px] [writing-mode:vertical-rl] tracking-[1px] whitespace-nowrap">项目管理器 (1)</div>
    <div class="mt-[11px] h-[76px] bg-[#f2f2f2] flex justify-start pt-[5px] [writing-mode:vertical-rl] whitespace-nowrap">消息日志</div>
    <div class="mt-[15px] h-[78px] bg-[#f2f2f2] flex justify-start pt-[5px] [writing-mode:vertical-rl] whitespace-nowrap">提示日志</div>
  </aside>

  <!-- left toolbars -->
  <div class="w-[28px] shrink-0 pl-px flex flex-col">
    <div class="h-[369px] w-[27px] pl-px bg-linear-to-r from-[#f5f6fc] to-[#c6c8d9] rounded-b-[3px] flex flex-col relative">
      <span class="h-[2px] w-[18px] mt-[3px] border-t-2 border-dotted border-[#999]"></span>
      <div class="mt-[3px] flex flex-col gap-[2.500px] leading-none">
        <span class="flex w-[17px] h-[18px] -mt-[1px] -mb-[1px] items-center bg-[#d5e7f7] border border-[#3d8fd6]"><svg class="w-[15px] h-4"><use href="#ptr"/></svg></span>
        <svg class="w-[17px] h-4 shrink-0"><use href="#zin"/></svg>
        <svg class="w-[17px] h-4 shrink-0"><use href="#zout"/></svg>
        <svg class="w-[17px] h-4 shrink-0"><use href="#cross"/></svg>
        <span class="flex"><svg class="w-[17px] h-4 shrink-0"><use href="#target"/></svg><svg class="w-[6px] h-4"><use href="#dd"/></svg></span>
        <svg class="w-[17px] h-4 shrink-0"><use href="#vsel"/></svg>
        <span class="flex"><svg class="w-[17px] h-4 shrink-0"><use href="#ell"/></svg><svg class="w-[6px] h-4"><use href="#dd"/></svg></span>
        <span class="flex"><svg class="w-[17px] h-4 shrink-0"><use href="#draw"/></svg><svg class="w-[6px] h-4"><use href="#dd"/></svg></span>
        <svg class="w-[17px] h-4 shrink-0"><use href="#dots"/></svg>
        <svg class="w-[17px] h-4 shrink-0"><use href="#bigT"/></svg>
        <svg class="w-[17px] h-4 shrink-0"><use href="#plot"/></svg>
        <span class="flex"><svg class="w-[17px] h-4 shrink-0"><use href="#arr"/></svg><svg class="w-[6px] h-4"><use href="#dd"/></svg></span>
        <span class="flex"><svg class="w-[17px] h-4 shrink-0"><use href="#ln"/></svg><svg class="w-[6px] h-4"><use href="#dd"/></svg></span>
        <span class="flex"><svg class="w-[17px] h-4 shrink-0"><use href="#rectt"/></svg><svg class="w-[6px] h-4"><use href="#dd"/></svg></span>
        <svg class="w-[17px] h-4 shrink-0"><use href="#hand"/></svg>
        <span class="flex"><svg class="w-[17px] h-4 shrink-0"><use href="#magic"/></svg><svg class="w-[6px] h-4"><use href="#dd"/></svg></span>
        <span class="flex"><svg class="w-[17px] h-4 shrink-0"><use href="#redg"/></svg><svg class="w-[6px] h-4"><use href="#dd"/></svg></span>
        <svg class="w-[17px] h-4 shrink-0"><use href="#spider"/></svg>
        <svg class="w-[17px] h-4 shrink-0"><use href="#exit"/></svg>
      </div>
      <svg class="absolute right-[3px] bottom-[1px] w-[7px] h-[7px]" viewBox="0 0 9 9"><path d="M1 1v7" stroke="#222"/><path d="M3 1l5 3.500-5 3.500z" fill="#222"/></svg>
    </div>
    <div class="h-[163px] mt-[3px] w-[19px] pl-px bg-linear-to-r from-[#f5f6fc] to-[#c6c8d9] rounded-b-[3px] flex flex-col relative">
      <span class="h-[2px] w-[14px] mt-[1px] border-t-2 border-dotted border-[#999]"></span>
      <div class="mt-[4px] flex flex-col gap-[2.500px]">
        <svg class="w-[17px] h-4 shrink-0"><use href="#stripes"/></svg>
        <svg class="w-[17px] h-4 shrink-0"><use href="#bubble"/></svg>
        <svg class="w-[17px] h-4 shrink-0"><use href="#lg"/></svg>
        <svg class="w-[17px] h-4 shrink-0"><use href="#bridge"/></svg>
        <svg class="w-[17px] h-4 shrink-0"><use href="#ladder"/></svg>
        <svg class="w-[17px] h-4 shrink-0"><use href="#clock"/></svg>
        <svg class="w-[17px] h-4 shrink-0"><use href="#folder"/></svg>
        <svg class="w-[17px] h-4 shrink-0"><use href="#grid"/></svg>
      </div>
      <svg class="absolute right-[3px] bottom-[1px] w-[7px] h-[7px]" viewBox="0 0 9 9"><path d="M1 1v7" stroke="#222"/><path d="M3 1l5 3.500-5 3.500z" fill="#222"/></svg>
    </div>
  </div>

  <!-- graph window -->
  <main class="flex-1 relative bg-[#bdbdbd] border-l-2 border-t-2 border-[#8c8c8c]">
    <span class="absolute left-[7px] top-[2px] text-[16px] font-bold text-[#222] font-['Liberation_Sans',sans-serif]">1</span>

    <svg class="absolute left-[162px] top-[123px]" width="501" height="383" viewBox="214 228 501 383" font-family="Liberation Serif, Noto Sans CJK SC, serif">
      <rect x="214" y="228" width="501" height="383" fill="#fff"/>
      <!-- walls -->
      <path d="M323 292H642M323 300H642M323 308H642M323 316H642M323 324H642M323 332H642M323 340H642M323 348H642M323 368H642M323 383H642M323 397H642M323 411H642M323 425H642M323 440H642M323 454H642M323 468H642M323 482H642" stroke="#e8e8e8"/>
      <path d="M293 321L323 292M293 329L323 300M293 337L323 308M293 345L323 316M293 353L323 324M293 361L323 332M293 369L323 340M293 377L323 348M293 397L323 368M293 412L323 383M293 426L323 397M293 440L323 411M293 454L323 425M293 469L323 440M293 483L323 454M293 497L323 468M293 511L323 482" stroke="#ececec"/>
      <path d="M323 284H642" stroke="#c8c8c8" stroke-width="2"/>
      <path d="M642 284V497" stroke="#bbb"/>
      <path d="M323 284V497H642" fill="none" stroke="#8e8e8e"/>
      <path d="M293 313L323 284M293 526L323 497M610 526L642 497" stroke="#aaa"/>
      <!-- axes -->
      <path d="M293 313V379M293 384V526H610" fill="none" stroke="#555" stroke-width="2"/>
      <path d="M287 313H293M287 321H293M287 329H293M287 337H293M287 345H293M287 353H293M287 361H293M287 369H293M287 377H293M290 317H293M290 325H293M290 333H293M290 341H293M290 349H293M290 357H293M290 365H293M290 373H293M287 398H293M287 412H293M287 426H293M287 441H293M287 455H293M287 469H293M287 483H293M287 497H293M287 512H293M287 526H293M290 405H293M290 419H293M290 433H293M290 448H293M290 462H293M290 476H293M290 490H293M290 504H293M290 519H293" stroke="#444"/>
      <path d="M287 385L299 378M287 388L299 381" stroke="#333" stroke-width="1.300"/>
      <path d="M315 526V532M360 526V532M406 526V532M451 526V532M497 526V532M542 526V532M588 526V532M338 526V529M383 526V529M428 526V529M474 526V529M519 526V529M565 526V529M610 526V529" stroke="#444"/>
      <!-- y labels -->
      <g fill="#555" font-size="12.500" text-anchor="end" letter-spacing="0">
        <text x="284" y="317">450</text><text x="284" y="325">400</text><text x="284" y="333">350</text><text x="284" y="341">300</text><text x="284" y="349">250</text><text x="284" y="357">200</text><text x="284" y="365">150</text><text x="284" y="373">100</text><text x="284" y="381">50</text>
      </g>
      <g fill="#555" font-size="12.500" text-anchor="end" letter-spacing="1.500">
        <text x="284" y="402">1.8</text><text x="284" y="416">1.6</text><text x="284" y="430">1.4</text><text x="284" y="445">1.2</text><text x="284" y="459">1.0</text><text x="284" y="473">0.8</text><text x="284" y="487">0.6</text><text x="284" y="501">0.4</text><text x="284" y="516">0.2</text><text x="284" y="530">0.0</text>
      </g>
      <g fill="#555" font-size="12" text-anchor="middle">
        <text x="315" y="545">1月</text><text x="360" y="545">2月</text><text x="406" y="545">3月</text><text x="451" y="545">4月</text><text x="497" y="545">5月</text><text x="542" y="545">6月</text><text x="588" y="545">7月</text>
        <text x="451" y="567" font-size="13">A</text>
        <text x="0" y="0" font-size="13" transform="translate(259 420) rotate(-90)">B</text>
      </g>
      <!-- bars -->
      <g>
        <path d="M310 452.700l5-4h18.300l-5 4z" fill="#c93838"/><rect x="310" y="452.700" width="18.300" height="60.300" fill="#f24141"/>
        <path d="M328.300 366.700l5-4h18.300l-5 4z" fill="#1a5bb8"/><rect x="328.300" y="366.700" width="18.300" height="146.300" fill="#1b6bdc"/><path d="M346.600 366.700l5-4V509l-5 4z" fill="#1a56a8"/>
        <path d="M355.500 452.700l5-4h18.300l-5 4z" fill="#c93838"/><rect x="355.500" y="452.700" width="18.300" height="60.300" fill="#f24141"/>
        <path d="M373.800 348l5-4h18.300l-5 4z" fill="#1a5bb8"/><rect x="373.800" y="348" width="18.300" height="165" fill="#1b6bdc"/><path d="M392.100 348l5-4V509l-5 4z" fill="#1a56a8"/>
        <path d="M401 414l5-4h18.300l-5 4z" fill="#c93838"/><rect x="401" y="414" width="18.300" height="99" fill="#f24141"/>
        <path d="M419.300 325l5-4h18.300l-5 4z" fill="#1a5bb8"/><rect x="419.300" y="325" width="18.300" height="188" fill="#1b6bdc"/><path d="M437.600 325l5-4V509l-5 4z" fill="#1a56a8"/>
        <path d="M446.500 385l5-4h18.300l-5 4z" fill="#c93838"/><rect x="446.500" y="385" width="18.300" height="128" fill="#f24141"/>
        <path d="M464.800 306l5-4h18.300l-5 4z" fill="#1a5bb8"/><rect x="464.800" y="306" width="18.300" height="207" fill="#1b6bdc"/><path d="M483.100 306l5-4V509l-5 4z" fill="#1a56a8"/>
        <path d="M492 414l5-4h18.300l-5 4z" fill="#c93838"/><rect x="492" y="414" width="18.300" height="99" fill="#f24141"/>
        <path d="M510.300 321l5-4h18.300l-5 4z" fill="#1a5bb8"/><rect x="510.300" y="321" width="18.300" height="192" fill="#1b6bdc"/><path d="M528.600 321l5-4V509l-5 4z" fill="#1a56a8"/>
        <path d="M537.500 399l5-4h18.300l-5 4z" fill="#c93838"/><rect x="537.500" y="399" width="18.300" height="114" fill="#f24141"/>
        <path d="M555.800 325l5-4h18.300l-5 4z" fill="#1a5bb8"/><rect x="555.800" y="325" width="18.300" height="188" fill="#1b6bdc"/><path d="M574.100 325l5-4V509l-5 4z" fill="#1a56a8"/>
        <path d="M583 428l5-4h18.300l-5 4z" fill="#c93838"/><rect x="583" y="428" width="18.300" height="85" fill="#f24141"/>
        <path d="M601.300 333l5-4h18.300l-5 4z" fill="#1a5bb8"/><rect x="601.300" y="333" width="18.300" height="180" fill="#1b6bdc"/><path d="M619.600 333l5-4V509l-5 4z" fill="#1a56a8"/>
      </g>
      <path d="M310 513.500H346.600M355.500 513.500H392.100M401 513.500H437.600M446.500 513.500H483.100M492 513.500H528.600M537.500 513.500H574.100M583 513.500H619.600" stroke="#c4c8d8"/>
      <!-- legend with selection handles -->
      <rect x="628" y="254" width="28" height="13" fill="#f24141"/>
      <rect x="628" y="271" width="28" height="13" fill="#1b6bdc"/>
      <text x="663" y="265" font-size="13" fill="#444">B</text>
      <rect x="625.500" y="251.500" width="46" height="33" fill="none" stroke="#8ba6d8"/>
      <g fill="#0000ff">
        <rect x="621" y="247" width="9" height="9"/><rect x="644" y="247" width="9" height="9"/><rect x="667" y="247" width="9" height="9"/>
        <rect x="621" y="264" width="9" height="9"/><rect x="667" y="264" width="9" height="9"/>
        <rect x="621" y="280" width="9" height="9"/><rect x="644" y="280" width="9" height="9"/>
      </g>
    </svg>
  </main>
</div>

<!-- context menu -->
<div class="absolute left-[653px] top-[270px] w-[248px] h-[369px] bg-white border border-[#a8a8a8] shadow-[2px_2px_3px_rgba(0,0,0,0.45)] text-[13px] text-[#2b2b2b] font-['Noto_Sans_CJK_SC',sans-serif]">
  <div class="absolute left-0 top-0 bottom-0 w-[18px] bg-[#f0f0f0]"></div>
  <div class="relative flex flex-col">
    <div class="h-[21.500px] flex items-center pl-[22px]">绘图细节...</div>
    <div class="h-[21.500px] flex items-center pl-[22px] pr-[3px] justify-between">图例<svg class="w-[9px] h-[11px]"><use href="#tri"/></svg></div>
    <div class="h-[21.500px] flex items-center pl-[22px]">仅使用一种图例类型并自动更新</div>
    <div class="h-[21.500px] flex items-center pl-[2px]"><svg class="w-[14px] h-[13px] mr-[6px]"><use href="#stripes"/></svg>添加色阶</div>
    <div class="h-[21.500px] flex items-center pl-[2px] text-[#a0a0a0]"><svg class="w-[14px] h-[13px] mr-[6px]"><use href="#bubble"/></svg>添加气泡标尺</div>
    <div class="h-[21.500px] flex items-center pl-[2px] pr-[9px]"><svg class="w-[14px] h-[13px] mr-[6px]"><use href="#cut"/></svg>剪切<span class="ml-auto font-['Open_Sans',sans-serif]">Ctrl+X</span></div>
    <div class="h-[21.500px] flex items-center pl-[2px] pr-[9px]"><svg class="w-[14px] h-[13px] mr-[6px]"><use href="#copy"/></svg>复制<span class="ml-auto font-['Open_Sans',sans-serif]">Ctrl+C</span></div>
    <div class="h-[21.500px] flex items-center pl-[22px]">复制为文本</div>
    <div class="h-[21.500px] flex items-center pl-[22px] pr-[9px]">删除<span class="ml-auto font-['Open_Sans',sans-serif]">Delete</span></div>
    <div class="h-[8px] flex items-center pl-[22px]"><span class="w-full h-[2px] bg-[#d6d6d6]"></span></div>
    <div class="h-[21.500px] flex items-center pl-[2px] text-[#a0a0a0]"><svg class="w-[14px] h-[13px] mr-[6px]"><use href="#front"/></svg>置于最前</div>
    <div class="h-[21.500px] flex items-center pl-[2px] text-[#a0a0a0]"><svg class="w-[14px] h-[13px] mr-[6px]"><use href="#back"/></svg>置于最后</div>
    <div class="h-[21.500px] flex items-center pl-[2px] text-[#a0a0a0]"><svg class="w-[14px] h-[13px] mr-[6px]"><use href="#dfront"/></svg>置于数据之前</div>
    <div class="h-[21.500px] flex items-center pl-[2px] text-[#a0a0a0]"><svg class="w-[14px] h-[13px] mr-[6px]"><use href="#dback"/></svg>置于数据之后</div>
    <div class="h-[6px] flex items-center pl-[22px]"><span class="w-full h-[2px] bg-[#d6d6d6]"></span></div>
    <div class="h-[21.500px] flex items-center pl-[22px] pr-[3px] justify-between">复制格式<svg class="w-[9px] h-[11px]"><use href="#tri"/></svg></div>
    <div class="h-[21.500px] flex items-center pl-[22px]">保存格式为主题...</div>
    <div class="mt-[8px] mx-[1px] h-[21px] flex items-center pl-[21px] rounded-[2px] border border-[#8fb3d3] bg-linear-to-b from-[#eef6fc] to-[#aacdea]">属性...</div>
  </div>
</div>

<!-- red annotation box -->
<div class="absolute left-[636px] top-[604px] w-[277px] h-[45px] border-[12px] border-[#f9360f]"></div>

</body>
</html>
